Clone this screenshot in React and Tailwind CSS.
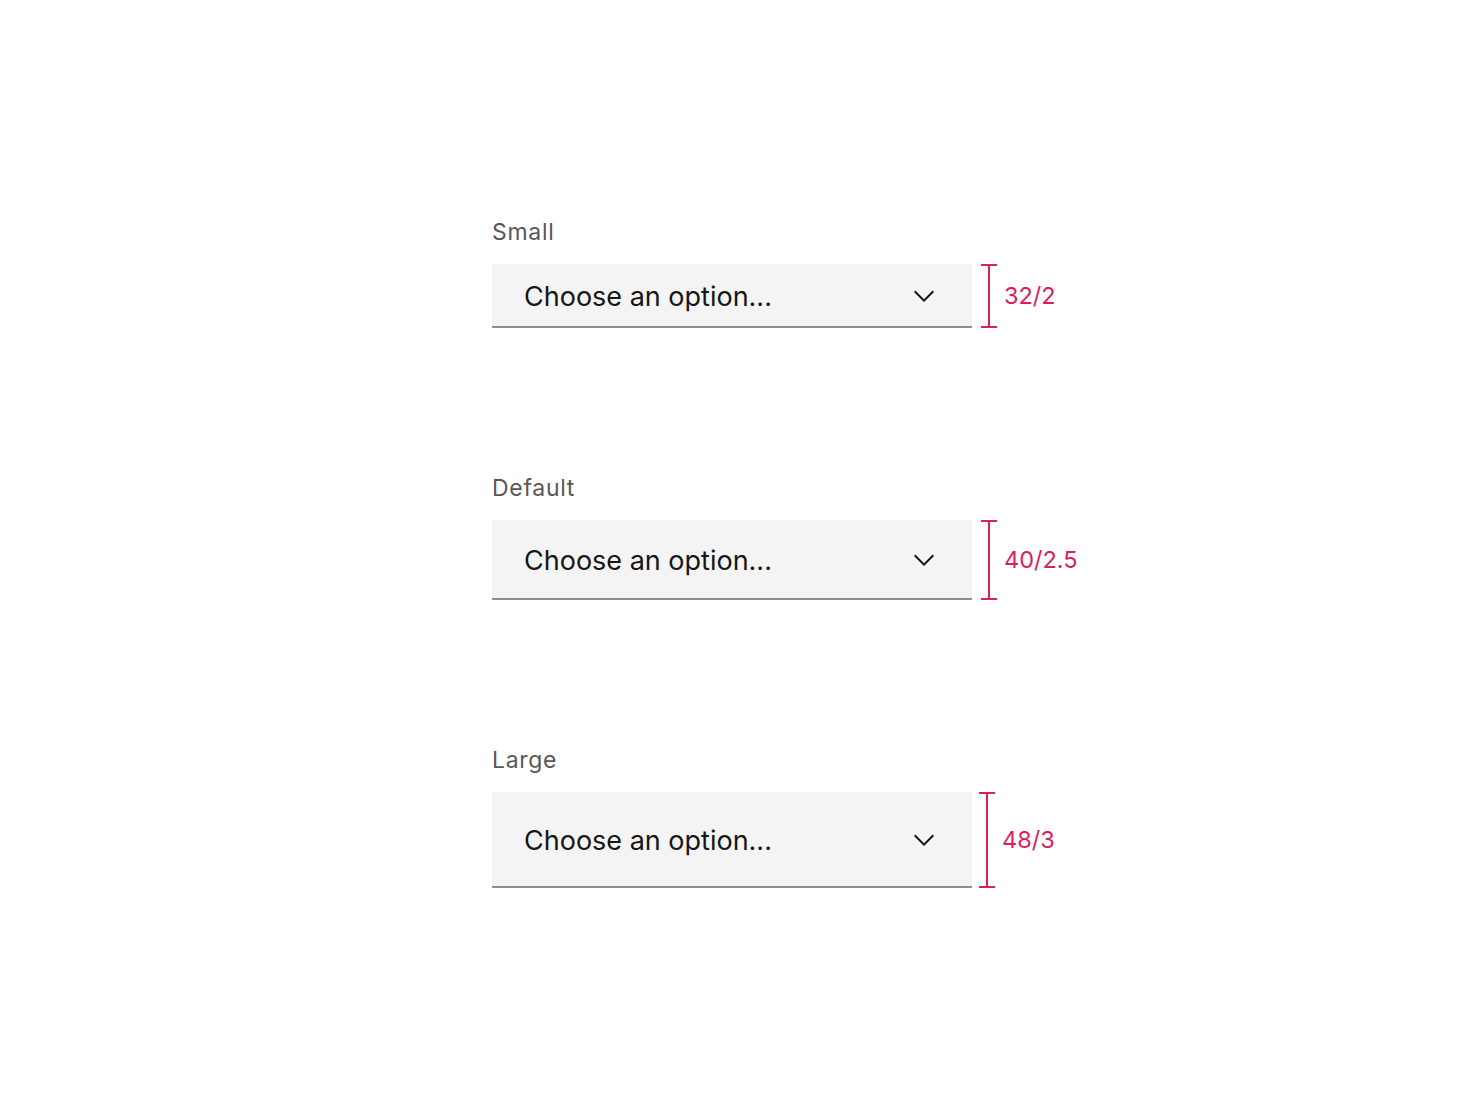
const PINK = "#da1e5e";

function Chevron() {
  return (
    <svg width="32" height="32" viewBox="0 0 32 32" className="shrink-0 mt-[1px]">
      <path d="M16 22L6 12l1.4-1.4 8.6 8.6 8.6-8.6L26 12z" fill="#161616" />
    </svg>
  );
}

function Bracket({ label, shift }) {
  return (
    <div className={`flex items-center self-stretch ${shift ? "ml-[7px]" : "ml-[9px]"}`}>
      <div className="flex flex-col items-center w-4 self-stretch">
        <div className="h-[2px] w-4 bg-[#da1e5e]" />
        <div className="w-[2px] flex-1 bg-[#da1e5e]" />
        <div className="h-[2px] w-4 bg-[#da1e5e]" />
      </div>
      <span className="ml-[7px] text-[23.5px] leading-none text-[#da1e5e]">{label}</span>
    </div>
  );
}

function Field({ title, height, spec, shift }) {
  return (
    <div className="flex flex-col">
      <div className="h-8 text-[23px] leading-8 text-[#5a5657] tracking-[0.7px]">{title}</div>
      <div className="mt-4 flex">
        <div
          className={`w-[480px] ${height} bg-[#f4f4f4] border-b-2 border-[#8d8d8d] flex items-center justify-between pl-8 pr-8`}
        >
          <span className="mt-[2px] text-[27px] text-[#161616] leading-none">Choose an option...</span>
          <Chevron />
        </div>
        <Bracket label={spec} shift={shift} />
      </div>
    </div>
  );
}

export default function App() {
  return (
    <div
      className="min-h-[1120px] w-[1472px] bg-white pt-[216px] pl-[492px] flex flex-col gap-[144px]"
      style={{ fontFamily: "Inter, 'Noto Sans', sans-serif" }}
    >
      <Field title="Small" height="h-[64px]" spec="32/2" />
      <Field title="Default" height="h-[80px]" spec="40/2.5" />
      <Field title="Large" height="h-[96px]" spec="48/3" shift />
    </div>
  );
}
